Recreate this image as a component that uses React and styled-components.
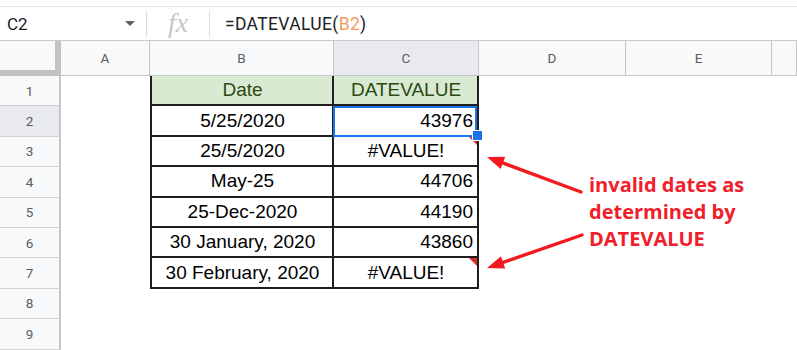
import React from 'react';
import styled, { createGlobalStyle } from 'styled-components';

const Global = createGlobalStyle`
  html, body { margin: 0; padding: 0; background: #fff; }
  body { font-family: Roboto, "Liberation Sans", Arial, sans-serif; }
`;

const Page = styled.div`
  position: relative;
  width: 797px;
  height: 350px;
  overflow: hidden;
  background: #fff;
  display: flex;
  flex-direction: column;
`;

const TopStrip = styled.div`
  flex: none;
  height: 6px;
  border-bottom: 1px solid #e1e3e6;
`;

const FormulaBar = styled.div`
  flex: none;
  height: 33px;
  display: flex;
  align-items: center;
  border-bottom: 1px solid #c7c9cc;
`;

const NameBox = styled.div`
  width: 146px;
  box-sizing: border-box;
  padding: 0 11px 0 7px;
  display: flex;
  align-items: center;
  font-family: Roboto, sans-serif;
  font-size: 17px;
  color: #202124;
`;

const Caret = styled.span`
  margin-left: auto;
  width: 0;
  height: 0;
  border-left: 5px solid transparent;
  border-right: 5px solid transparent;
  border-top: 5px solid #5f6368;
`;

const Divider = styled.div`
  width: 1px;
  height: 26px;
  background: #dadce0;
`;

const Fx = styled.div`
  width: 62px;
  text-align: center;
  font-family: "Liberation Serif", serif;
  font-style: italic;
  font-size: 28px;
  line-height: 1;
  color: #c6c8cb;
  padding-bottom: 2px;
`;

const Formula = styled.div`
  padding-left: 15px;
  font-family: Roboto, sans-serif;
  font-size: 17.5px;
  letter-spacing: 0.35px;
  color: #202124;
`;

const Ref = styled.span`
  color: ${p => p.$color};
`;

const Grid = styled.div`
  flex: none;
  display: grid;
  grid-template-columns: 61px 89px 184px 145px 147px 146px 25px;
  grid-template-rows: 35px repeat(9, 30.4px);
`;

const Corner = styled.div`
  box-sizing: border-box;
  background: #f8f9fa;
  border-right: 6px solid #c0c2c4;
  border-bottom: 6px solid #c0c2c4;
`;

const ColHead = styled.div`
  box-sizing: border-box;
  background: ${p => (p.$selected ? '#e8eaed' : '#f8f9fa')};
  border-right: 1px solid #c4c6c8;
  border-bottom: 1px solid #c4c6c8;
  display: flex;
  align-items: center;
  justify-content: center;
  font-family: Roboto, sans-serif;
  font-size: 13.5px;
  color: #5a5d61;
`;

const RowHead = styled.div`
  box-sizing: border-box;
  background: ${p => (p.$selected ? '#e8eaed' : '#f8f9fa')};
  border-right: 2px solid #c4c6c8;
  border-bottom: 1px solid #d0d2d4;
  display: flex;
  align-items: center;
  justify-content: center;
  font-family: Roboto, sans-serif;
  font-size: 13.5px;
  color: #5a5d61;
`;

const EmptyCell = styled.div`
  background: #fff;
`;

const TableCell = styled.div`
  position: relative;
  box-sizing: border-box;
  background: ${p => (p.$head ? '#d9ead3' : '#fff')};
  border-right: 2px solid #1e1e1e;
  border-bottom: 2px solid #1e1e1e;
  ${p => (p.$left ? 'border-left: 2px solid #1e1e1e;' : '')}
  display: flex;
  align-items: center;
  justify-content: ${p => p.$align};
  padding: 0 4px 0 5px;
  font-family: "Liberation Sans", Arial, sans-serif;
  font-size: 19px;
  color: ${p => (p.$head ? '#2b4a12' : '#000')};
  white-space: nowrap;
`;

const Selection = styled.div`
  position: absolute;
  top: 0;
  left: -1px;
  right: 0;
  bottom: -2px;
  border: 2px solid #1a73e8;
  z-index: 2;
  pointer-events: none;
`;

const Handle = styled.div`
  position: absolute;
  right: -7px;
  bottom: -5px;
  width: 9px;
  height: 9px;
  background: #1a73e8;
  box-shadow: 0 0 0 1px #fff;
`;

const ErrorMark = styled.div`
  position: absolute;
  top: 0;
  right: 0;
  width: 0;
  height: 0;
  border-top: 8px solid #d93025;
  border-left: 8px solid transparent;
`;

const Overlay = styled.svg`
  position: absolute;
  left: 0;
  top: 0;
  pointer-events: none;
`;

const Note = styled.div`
  position: absolute;
  left: 589px;
  top: 171px;
  font-family: "Open Sans", sans-serif;
  font-weight: 700;
  font-size: 20px;
  line-height: 27px;
  color: #f0202a;
`;

const RED = '#f21a1f';

function Arrow({ x1, y1, x2, y2 }) {
  const dx = x2 - x1;
  const dy = y2 - y1;
  const L = Math.hypot(dx, dy);
  const ux = dx / L;
  const uy = dy / L;
  const hl = 17;
  const hw = 6.5;
  const bx = x2 - ux * hl;
  const by = y2 - uy * hl;
  const px = -uy * hw;
  const py = ux * hw;
  return (
    <g>
      <line x1={x1} y1={y1} x2={bx + ux * 3} y2={by + uy * 3} stroke={RED} strokeWidth="3.4" strokeLinecap="round" />
      <polygon points={`${x2},${y2} ${bx + px},${by + py} ${bx - px},${by - py}`} fill={RED} />
    </g>
  );
}

const cols = ['A', 'B', 'C', 'D', 'E', ''];
const table = [
  { b: 'Date', c: 'DATEVALUE', head: true },
  { b: '5/25/2020', c: '43976', selected: true },
  { b: '25/5/2020', c: '#VALUE!', err: true },
  { b: 'May-25', c: '44706' },
  { b: '25-Dec-2020', c: '44190' },
  { b: '30 January, 2020', c: '43860' },
  { b: '30 February, 2020', c: '#VALUE!', err: true },
];

export default function App() {
  const rows = [];
  for (let r = 1; r <= 9; r++) {
    const t = table[r - 1];
    rows.push(<RowHead key={`h${r}`} $selected={r === 2}>{r}</RowHead>);
    rows.push(<EmptyCell key={`a${r}`} />);
    if (t) {
      rows.push(
        <TableCell key={`b${r}`} $left $head={t.head} $align="center">{t.b}</TableCell>
      );
      const numeric = /^\d+$/.test(t.c);
      rows.push(
        <TableCell key={`c${r}`} $head={t.head} $align={numeric ? 'flex-end' : 'center'}>
          {t.c}
          {t.err && <ErrorMark />}
          {t.selected && (
            <Selection>
              <Handle />
            </Selection>
          )}
        </TableCell>
      );
    } else {
      rows.push(<EmptyCell key={`b${r}`} />);
      rows.push(<EmptyCell key={`c${r}`} />);
    }
    rows.push(<EmptyCell key={`d${r}`} />);
    rows.push(<EmptyCell key={`e${r}`} />);
    rows.push(<EmptyCell key={`f${r}`} />);
  }

  return (
    <Page>
      <Global />
      <TopStrip />
      <FormulaBar>
        <NameBox>
          C2
          <Caret />
        </NameBox>
        <Divider />
        <Fx>fx</Fx>
        <Divider />
        <Formula>
          =DATEVALUE(<Ref $color="#f29b5c">B2</Ref>)
        </Formula>
      </FormulaBar>
      <Grid>
        <Corner />
        {cols.map((c, i) => (
          <ColHead key={i} $selected={c === 'C'}>{c}</ColHead>
        ))}
        {rows}
      </Grid>
      <Overlay width="797" height="350" viewBox="0 0 797 350">
        <Arrow x1={581} y1={192} x2={487} y2={157} />
        <Arrow x1={582} y1={235} x2={487} y2={268} />
      </Overlay>
      <Note>
        invalid dates as
        <br />
        determined by
        <br />
        DATEVALUE
      </Note>
    </Page>
  );
}
